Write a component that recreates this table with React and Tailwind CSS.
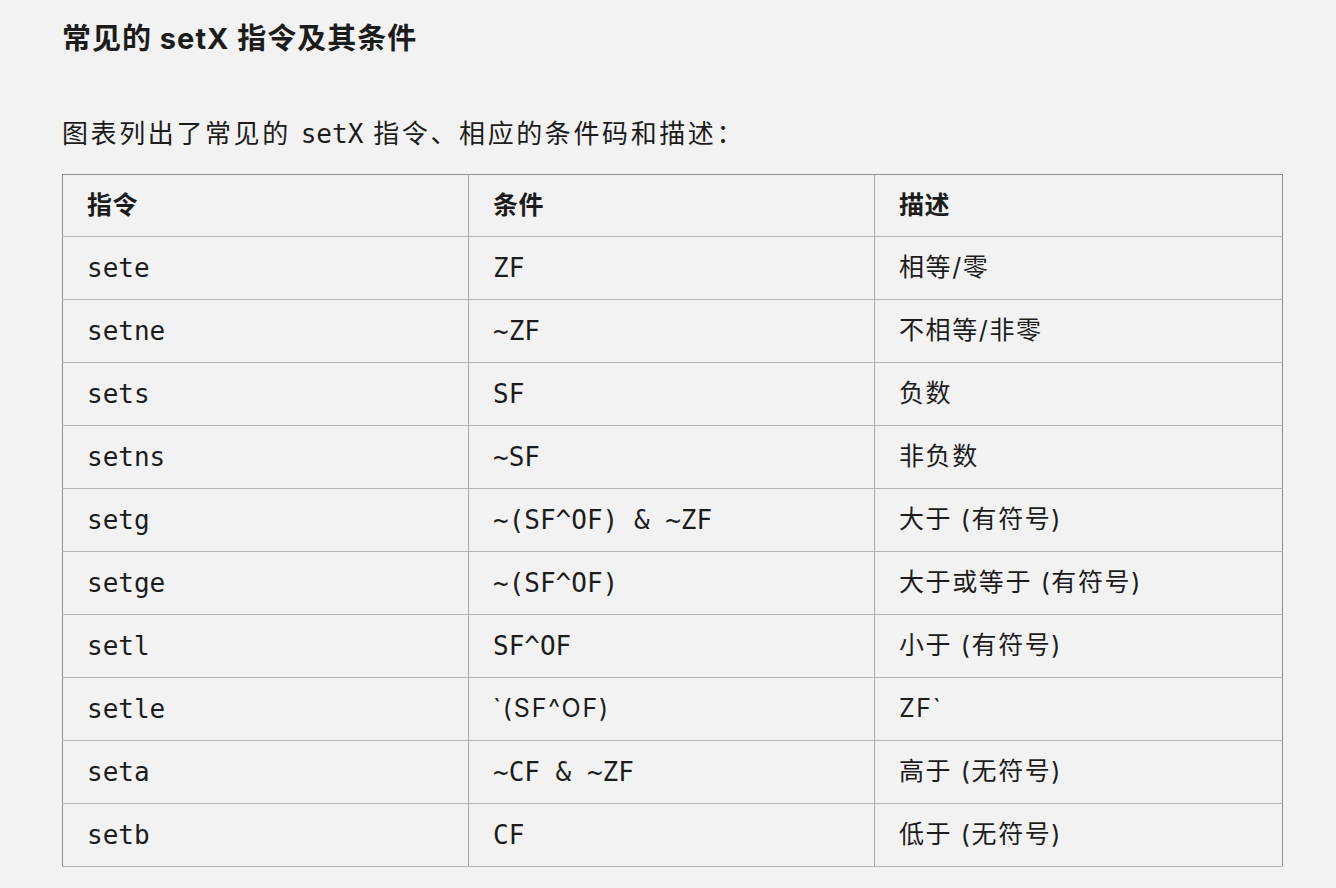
const rows = [
  ["sete", "ZF", "相等/零"],
  ["setne", "~ZF", "不相等/非零"],
  ["sets", "SF", "负数"],
  ["setns", "~SF", "非负数"],
  ["setg", "~(SF^OF) & ~ZF", "大于 (有符号)"],
  ["setge", "~(SF^OF)", "大于或等于 (有符号)"],
  ["setl", "SF^OF", "小于 (有符号)"],
  ["setle", "`(SF^OF)", "ZF`", true],
  ["seta", "~CF & ~ZF", "高于 (无符号)"],
  ["setb", "CF", "低于 (无符号)"],
];

const sans = "font-['Inter','Noto_Sans_CJK_SC',sans-serif]";
const mono = "font-['DejaVu_Sans_Mono','Noto_Sans_CJK_SC',monospace]";

export default function App() {
  return (
    <div className={`min-h-screen bg-[#f2f2f2] px-[62px] pt-[19px] text-[#1c1c1c] ${sans}`}>
      <h2 className="text-[29px] leading-[40px] font-bold tracking-[1px]">常见的 setX 指令及其条件</h2>
      <p className="mt-[55px] text-[26px] leading-[40px] tracking-[2.6px]">
        图表列出了常见的 <span className={`${mono} tracking-normal`}>setX</span> 指令、相应的条件码和描述：
      </p>
      <table className="mt-[20px] w-[1220px] border-collapse border border-[#8e8e8e] table-fixed">
        <colgroup>
          <col className="w-[406px]" />
          <col className="w-[406px]" />
          <col className="w-[408px]" />
        </colgroup>
        <thead>
          <tr className="h-[62px] border-b border-[#b4b4b4]">
            {["指令", "条件", "描述"].map((h, i) => (
              <th key={h} className={`text-left font-bold text-[25px] tracking-[0.5px] pl-6 ${i > 0 ? "border-l border-[#a9a9a9]" : ""}`}>{h}</th>
            ))}
          </tr>
        </thead>
        <tbody>
          {rows.map(([ins, cond, desc, plain]) => (
            <tr key={ins} className="h-[63px] border-b border-[#b4b4b4]">
              <td className={`pl-6 text-[26px] ${mono}`}>{ins}</td>
              <td className={`pl-6 border-l border-[#a9a9a9] ${plain ? "text-[25px] tracking-[1.8px]" : `text-[26px] ${mono}`}`}>{cond}</td>
              <td className="pl-6 border-l border-[#a9a9a9] text-[25px] tracking-[1.6px]">{desc}</td>
            </tr>
          ))}
        </tbody>
      </table>
    </div>
  );
}
